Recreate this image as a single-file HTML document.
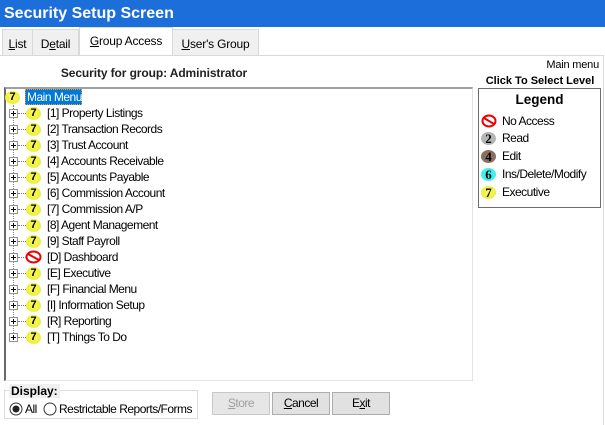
<!DOCTYPE html>
<html><head><style>
*{margin:0;padding:0;box-sizing:border-box}
body{width:605px;height:425px;background:#fff;font-family:"Liberation Sans",Arial,sans-serif;font-size:12px;letter-spacing:-0.5px;color:#000;position:relative;overflow:hidden}
.a{position:absolute}
.title{left:0;top:0;width:605px;height:27px;background:#1c6fdb;color:#fff;font-weight:bold;font-size:16px;padding:4px 0 0 4px;line-height:20px;letter-spacing:0}
.tabbar{left:0;top:27px;width:605px;height:29px;background:#fff}
.tab{position:absolute;top:2px;height:26px;background:#f0f0f0;border:1px solid #d9d9d9;border-bottom:none;font-size:12px;padding:7px 0 0 0;text-align:center;letter-spacing:-0.2px}
.tab.sel{top:0;height:29px;background:#fff;padding-top:6px}
.line{left:0;top:55px;width:603px;height:1px;background:#d9d9d9}
.vr{left:603px;top:55px;width:1px;height:370px;background:#d9d9d9}
.tree{left:4px;top:87px;width:469px;height:294px;border-left:2px solid #696969;border-top:2px solid #a0a0a0;border-right:1px solid #e3e3e3;border-bottom:1px solid #e3e3e3}
.row{position:absolute;height:16px;line-height:16px;white-space:nowrap}
.ic{position:absolute;width:15px;height:13px;border-radius:50%;background:radial-gradient(circle at 50% 45%,#f7f76a 0,#f0f040 60%,#e0e040 100%);font-family:"Liberation Sans",sans-serif;font-weight:bold;font-size:11px;line-height:13px;text-align:center;color:#000;letter-spacing:0}
.plus{position:absolute;width:9px;height:9px;border:1px solid #919191;background:#fff}
.plus:before{content:"";position:absolute;left:1px;top:3px;width:5px;height:1px;background:#000}
.plus:after{content:"";position:absolute;left:3px;top:1px;width:1px;height:5px;background:#000}
.dot{position:absolute;height:1px;border-top:1px dotted #808080}
.u{text-decoration:underline}
.btn{position:absolute;top:392px;width:58px;height:23px;background:#e1e1e1;border:1px solid #adadad;text-align:center;line-height:21px}
.lg{font-family:"Liberation Serif",serif;font-size:13px}
</style></head><body>
<div class="a title">Security Setup Screen</div>
<div class="a tabbar">
<div class="tab" style="left:2px;width:31px"><span class="u">L</span>ist</div>
<div class="tab" style="left:32px;width:47px">D<span class="u">e</span>tail</div>
<div class="tab sel" style="left:79px;width:94px"><span class="u">G</span>roup Access</div>
<div class="tab" style="left:172px;width:87px"><span class="u">U</span>ser's Group</div>
</div>
<div class="a line"></div>
<div class="a vr"></div>
<div class="a" style="left:0;top:66px;width:308px;text-align:center;font-weight:bold;color:#222;letter-spacing:-0.1px">Security for group: Administrator</div>
<div class="a" style="left:480px;top:59px;width:119px;text-align:right;font-size:11px;letter-spacing:-0.2px">Main menu</div>
<div class="a" style="left:478px;top:75px;width:124px;text-align:center;font-weight:bold;font-size:11px;letter-spacing:0">Click To Select Level</div>
<div class="a" style="left:478px;top:88px;width:123px;height:120px;border:1px solid #6d6d6d"></div>
<div class="a" style="left:478px;top:92px;width:123px;text-align:center;font-weight:bold;font-size:13.5px;letter-spacing:0">Legend</div>
<svg class="a" style="left:481px;top:114px" width="16" height="14"><ellipse cx="8" cy="7" rx="6.5" ry="5.5" fill="none" stroke="#e00" stroke-width="2"/><line x1="3" y1="4" x2="13" y2="10" stroke="#e00" stroke-width="2"/></svg>
<div class="a" style="left:502px;top:114px">No Access</div>
<div class="ic lg a" style="left:481px;top:132px;background:#b5b5b5">2</div><div class="a" style="left:502px;top:131px">Read</div>
<div class="ic lg a" style="left:481px;top:150px;background:#8a7060">4</div><div class="a" style="left:502px;top:149px">Edit</div>
<div class="ic lg a" style="left:481px;top:168px;background:#40f0f0">6</div><div class="a" style="left:502px;top:167px">Ins/Delete/Modify</div>
<div class="ic lg a" style="left:481px;top:186px">7</div><div class="a" style="left:502px;top:185px">Executive</div>

<div class="a tree"></div>
<div class="ic a" style="left:5px;top:91px">7</div>
<div class="a" style="left:25px;top:89px;width:57px;height:16px;background:#0078d7;color:#fff;line-height:14px;padding-left:1px;border:1px dotted #f0a030;white-space:nowrap">Main Menu</div>
<div class="a" style="left:13px;top:105px;width:0;height:232px;border-left:1px dotted #808080"></div>
<div id="rows"></div>
<div class="a" style="left:4px;top:390px;width:194px;height:29px;border:1px solid #dcdcdc"></div>
<div class="a" style="left:9px;top:384px;background:#f0f0f0;font-weight:bold;padding:0 2px;letter-spacing:0">Display:</div>
<svg class="a" style="left:9px;top:402px" width="14" height="14"><circle cx="7" cy="7" r="6" fill="#fff" stroke="#333"/><circle cx="7" cy="7" r="3.5" fill="#222"/></svg>
<div class="a" style="left:25px;top:402px">All</div>
<svg class="a" style="left:43px;top:402px" width="14" height="14"><circle cx="7" cy="7" r="6" fill="#fff" stroke="#333"/></svg>
<div class="a" style="left:59px;top:402px">Restrictable Reports/Forms</div>
<div class="btn" style="left:212px;color:#a0a0a0;border-color:#c8c8c8;background:#e6e6e6"><span class="u">S</span>tore</div>
<div class="btn" style="left:272px"><span class="u">C</span>ancel</div>
<div class="btn" style="left:332px">E<span class="u">x</span>it</div>
<script>
var items=["[1] Property Listings","[2] Transaction Records","[3] Trust Account","[4] Accounts Receivable","[5] Accounts Payable","[6] Commission Account","[7] Commission A/P","[8] Agent Management","[9] Staff Payroll","[D] Dashboard","[E] Executive","[F] Financial Menu","[I] Information Setup","[R] Reporting","[T] Things To Do"];
var h="";
items.forEach(function(t,i){var y=113+16*i;
h+='<div class="plus" style="left:9px;top:'+(y-4)+'px"></div>';
h+='<div class="dot" style="left:18px;top:'+y+'px;width:8px"></div>';
if(t[1]=="D")h+='<svg class="a" style="left:25px;top:'+(y-7)+'px" width="17" height="14"><ellipse cx="8.5" cy="7" rx="7" ry="5.5" fill="none" stroke="#e00" stroke-width="2"/><line x1="3" y1="4" x2="14" y2="10" stroke="#e00" stroke-width="2"/></svg>';
else h+='<div class="ic" style="left:26px;top:'+(y-6)+'px">7</div>';
h+='<div class="row" style="left:47px;top:'+(y-8)+'px">'+t+'</div>';});
document.getElementById("rows").innerHTML=h;
</script>
</body></html>
